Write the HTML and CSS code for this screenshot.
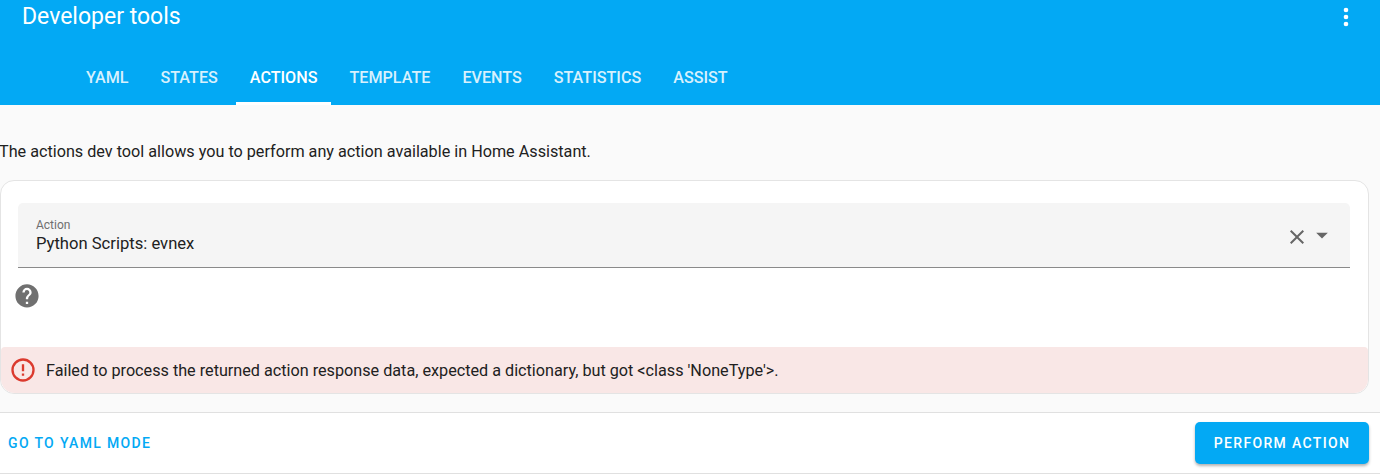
FILE: index.html
```html
<!DOCTYPE html>
<html lang="en">
<head>
  <meta charset="UTF-8">
  <title>Developer tools</title>
  <link rel="stylesheet" href="styles.css">
</head>
<body>
  <header class="header">
    <div class="toolbar">
      <div class="title">Developer tools</div>
      <svg class="menu-icon" viewBox="0 0 24 24"><path d="M12,16A2,2 0 0,1 14,18A2,2 0 0,1 12,20A2,2 0 0,1 10,18A2,2 0 0,1 12,16M12,10A2,2 0 0,1 14,12A2,2 0 0,1 12,14A2,2 0 0,1 10,12A2,2 0 0,1 12,10M12,4A2,2 0 0,1 14,6A2,2 0 0,1 12,8A2,2 0 0,1 10,6A2,2 0 0,1 12,4Z"/></svg>
    </div>
    <nav class="tabs">
      <a class="tab">YAML</a>
      <a class="tab">STATES</a>
      <a class="tab active">ACTIONS</a>
      <a class="tab">TEMPLATE</a>
      <a class="tab">EVENTS</a>
      <a class="tab">STATISTICS</a>
      <a class="tab">ASSIST</a>
    </nav>
  </header>

  <main class="content">
    <p class="description">The actions dev tool allows you to perform any action available in Home Assistant.</p>

    <section class="card">
      <div class="field">
        <div class="field-text">
          <div class="field-label">Action</div>
          <div class="field-value">Python Scripts: evnex</div>
        </div>
        <svg class="close-icon" viewBox="0 0 24 24"><path d="M19,6.41L17.59,5L12,10.59L6.41,5L5,6.41L10.59,12L5,17.59L6.41,19L12,13.41L17.59,19L19,17.59L13.41,12L19,6.41Z"/></svg>
        <svg class="drop-icon" viewBox="0 0 24 24"><path d="M7,10L12,15L17,10H7Z"/></svg>
      </div>
      <svg class="help-icon" viewBox="0 0 24 24"><path d="M15.07,11.25L14.17,12.17C13.45,12.89 13,13.5 13,15H11V14.5C11,13.39 11.45,12.39 12.17,11.67L13.41,10.41C13.78,10.05 14,9.55 14,9C14,7.89 13.1,7 12,7A2,2 0 0,0 10,9H8A4,4 0 0,1 12,5A4,4 0 0,1 16,9C16,9.88 15.64,10.67 15.07,11.25M13,19H11V17H13M12,2A10,10 0 0,0 2,12A10,10 0 0,0 12,22A10,10 0 0,0 22,12C22,6.47 17.5,2 12,2Z"/></svg>
      <div class="alert">
        <svg class="alert-icon" viewBox="0 0 24 24"><path d="M11,15H13V17H11V15M11,7H13V13H11V7M12,2C6.47,2 2,6.5 2,12A10,10 0 0,0 12,22A10,10 0 0,0 22,12A10,10 0 0,0 12,2M12,20A8,8 0 0,1 4,12A8,8 0 0,1 12,4A8,8 0 0,1 20,12A8,8 0 0,1 12,20Z"/></svg>
        <span>Failed to process the returned action response data, expected a dictionary, but got &lt;class 'NoneType'&gt;.</span>
      </div>
    </section>
  </main>

  <footer class="footer">
    <a class="yaml-link">GO TO YAML MODE</a>
    <button class="perform">PERFORM ACTION</button>
  </footer>
</body>
</html>
```

FILE: styles.css
```css
html, body {
  height: 476px;
  overflow: hidden;
}
body {
  margin: 0;
  font-family: Roboto, sans-serif;
  background-color: #fff;
  color: #212121;
}
.header {
  height: 105px;
  background-color: #03a9f4;
  color: #fff;
}
.toolbar {
  display: flex;
  justify-content: space-between;
  align-items: center;
  height: 33px;
  padding: 0 20px 0 22px;
}
.title {
  font-size: 23px;
}
.menu-icon {
  width: 28px;
  height: 28px;
  fill: #fff;
}
.tabs {
  display: flex;
  gap: 4px;
  height: 72px;
  padding-left: 72px;
}
.tab {
  display: flex;
  align-items: center;
  box-sizing: border-box;
  height: 72px;
  padding: 20px 14px 0;
  font-size: 16.15px;
  font-weight: 500;
  color: rgba(255, 255, 255, 0.85);
  border-bottom: 3px solid transparent;
}
.tab.active {
  color: #fff;
  border-bottom-color: #fff;
}
.content {
  height: 307px;
  box-sizing: border-box;
  padding-top: 37px;
  background-color: #fafafa;
}
.description {
  margin: 0 0 18px -1px;
  font-size: 16.2px;
  line-height: 20px;
}
.card {
  box-sizing: border-box;
  width: 1369px;
  height: 214px;
  padding: 22px 0 0;
  background-color: #fff;
  border: 1px solid #e4e4e4;
  border-radius: 14px;
  display: flex;
  flex-direction: column;
}
.field {
  display: flex;
  align-items: center;
  box-sizing: border-box;
  width: 1332px;
  height: 65px;
  margin-left: 17px;
  padding: 0 14px 0 18px;
  background-color: #f5f5f5;
  border-bottom: 1px solid #8a8a8a;
  border-radius: 5px 5px 0 0;
}
.field-text {
  flex: 1;
  padding-top: 4px;
}
.field-label {
  font-size: 12px;
  line-height: 16px;
  margin-top: -2px;
  color: #6f6f6f;
}
.field-value {
  font-size: 16.6px;
  line-height: 20px;
  margin-top: 1px;
}
.close-icon {
  width: 24px;
  height: 24px;
  margin-top: 5px;
  fill: #666;
}
.drop-icon {
  width: 28px;
  height: 28px;
  margin-left: -1px;
  fill: #666;
}
.help-icon {
  width: 28px;
  height: 28px;
  margin: 14px 0 0 12px;
  fill: #707070;
}
.alert {
  display: flex;
  align-items: center;
  gap: 9px;
  height: 46px;
  margin-top: 38px;
  padding-left: 8px;
  background-color: #f9e7e6;
  border-radius: 4px 4px 14px 14px;
  font-size: 16.2px;
}
.alert-icon {
  width: 28px;
  height: 28px;
  fill: #db3a2e;
}
.footer {
  display: flex;
  justify-content: space-between;
  align-items: center;
  box-sizing: border-box;
  height: 62px;
  padding: 0 11px 0 8px;
  border-top: 1px solid #e0e0e0;
  border-bottom: 1px solid #e0e0e0;
}
.yaml-link {
  font-size: 14px;
  font-weight: 500;
  letter-spacing: 1.35px;
  color: #03a9f4;
}
.perform {
  width: 174px;
  height: 42px;
  padding: 0;
  font-family: Roboto, sans-serif;
  font-size: 14px;
  font-weight: 500;
  letter-spacing: 1.35px;
  color: #fff;
  background-color: #03a9f4;
  border: none;
  border-radius: 5px;
  box-shadow: 0 2px 3px rgba(0, 0, 0, 0.3);
}
```
